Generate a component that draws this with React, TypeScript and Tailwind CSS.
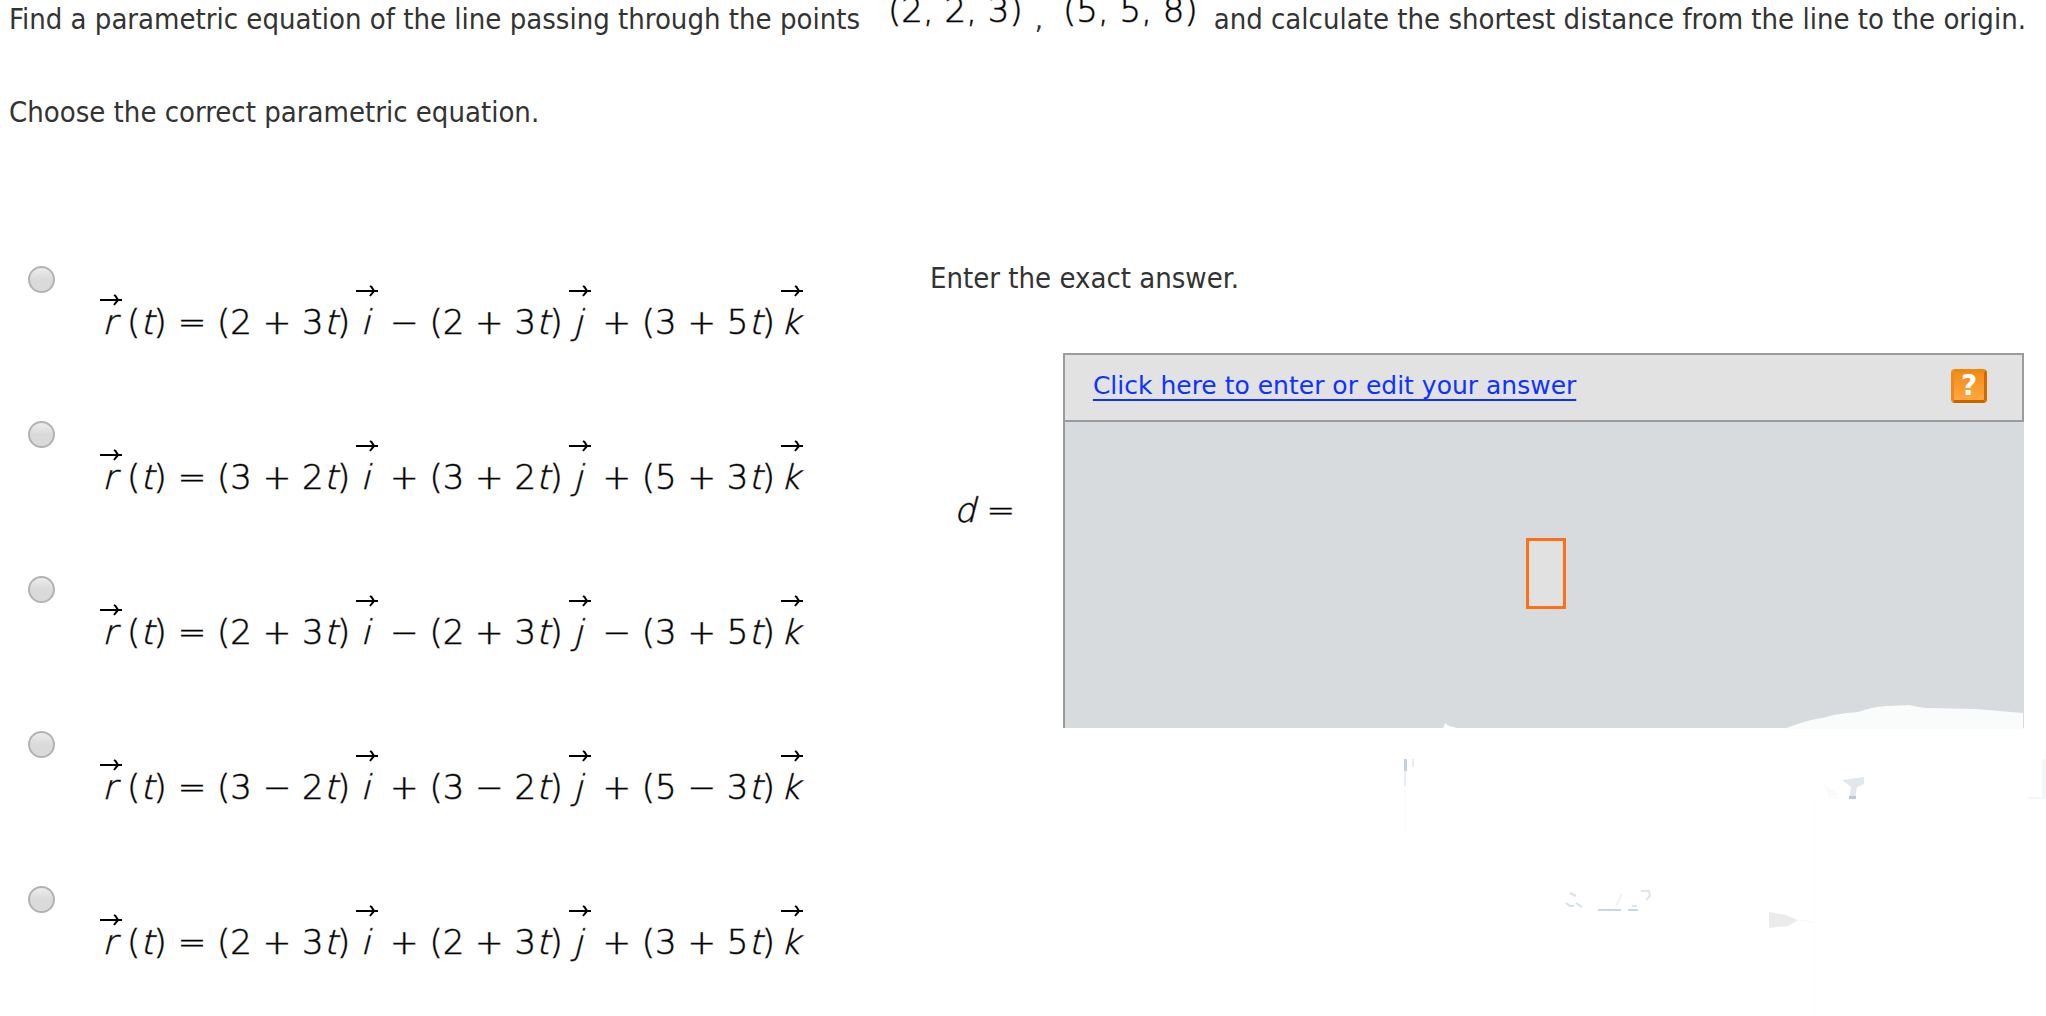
import React, { useState } from 'react';

interface Choice {
    id: string;
    inner: string;
    ops: [string, string];
    coefs: [string, string, string];
    steps: [string, string, string];
}

const choices: Choice[] = [
    { id: 'a', inner: '+', ops: ['−', '+'], coefs: ['2', '2', '3'], steps: ['3', '3', '5'] },
    { id: 'b', inner: '+', ops: ['+', '+'], coefs: ['3', '3', '5'], steps: ['2', '2', '3'] },
    { id: 'c', inner: '+', ops: ['−', '−'], coefs: ['2', '2', '3'], steps: ['3', '3', '5'] },
    { id: 'd', inner: '−', ops: ['+', '+'], coefs: ['3', '3', '5'], steps: ['2', '2', '3'] },
    { id: 'e', inner: '+', ops: ['+', '+'], coefs: ['2', '2', '3'], steps: ['3', '3', '5'] },
];

const mathFont =
    "font-['DejaVu_Sans_Light','DejaVu_Sans',sans-serif] text-[34px] leading-[40px] text-black whitespace-pre [-webkit-text-stroke:1px_#00000080]";

const Vec: React.FC<{ name: string; low?: boolean }> = ({ name, low }) => (
    <span className={`relative inline-block w-6 pr-1 text-center ${low ? 'mr-1' : 'ml-[5px]'}`}>
        <svg
            className={`absolute left-0 ${low ? '-top-2' : '-top-[17px]'}`}
            width="24"
            height="12"
            viewBox="0 0 24 12"
            fill="none"
            stroke="black"
            strokeWidth="2"
            aria-hidden="true"
        >
            <path d="M1 6H23M15 1L16.5 2L19 6L16.5 9L15 11" />
            <path d="M18 4V8" />
        </svg>
        <i>{name}</i>
    </span>
);

const Term: React.FC<{ coef: string; inner: string; step: string }> = ({ coef, inner, step }) => (
    <>
        ({coef} {inner} {step}
        <i>t</i>)
    </>
);

const Equation: React.FC<{ choice: Choice }> = ({ choice }) => {
    const { inner, ops, coefs, steps } = choice;
    return (
        <span className={`block pt-9 ${mathFont}`}>
            <Vec name="r" low />(<i>t</i>){' = '}
            <Term coef={coefs[0]} inner={inner} step={steps[0]} />
            <Vec name="i" />
            {` ${ops[0]} `}
            <Term coef={coefs[1]} inner={inner} step={steps[1]} />
            <Vec name="j" />
            {` ${ops[1]} `}
            <Term coef={coefs[2]} inner={inner} step={steps[2]} />
            <Vec name="k" />
        </span>
    );
};

// Leftover marks under the answer box
const Smudges = () => (
    <svg className="relative -mt-6 self-end" width="666" height="312" viewBox="1380 704 666 312" aria-hidden="true">
        <path d="M1786 728C1798 724 1808 720 1822 718C1836 714 1846 713 1858 712C1870 708 1880 706 1890 706L1909 705C1916 706 1922 708 1928 708L1975 709L2023 713V729H1786Z" fill="#fafbfb" />
        <path d="M1443 729L1445 723L1449 726L1457 728V729Z" fill="#ffffff" />
        <path d="M1404 759H1407V771H1404Z" fill="#c3d1de" />
        <path d="M1404 771H1406V786H1404ZM1412 759H1414V767H1412Z" fill="#e9eff4" />
        <path d="M1842 780L1864 777V784L1857 787L1855 799H1849L1851 787Z" fill="#e2e7ed" />
        <path d="M1849 796H1856V799H1849Z" fill="#bccbd9" />
        <path d="M1824 784L1838 794V799H1829Z" fill="#f9fafb" />
        <path d="M2042 759H2046V799H2028V797H2042Z" fill="#f4f7f9" />
        <path d="M1566 903L1570 906H1574M1576 903L1582 907M1570 893L1576 896" stroke="#d5e1e9" strokeWidth="2" fill="none" />
        <path d="M1598 910H1621M1628 910H1638" stroke="#c6d7e3" strokeWidth="2" />
        <path d="M1641 891L1649 891L1650 896L1646 900M1632 906H1637" stroke="#dbe6ee" strokeWidth="2" fill="none" />
        <path d="M1616 906L1622 894" stroke="#eef3f6" strokeWidth="2" />
        <path d="M1769 912L1786 915L1798 920L1788 926L1769 928Z" fill="#ebebeb" />
        <path d="M1798 920L1812 922" stroke="#f9f9f9" strokeWidth="2" />
        <path d="M1814 800V1016M1835 800V832" stroke="#fbfbfb" strokeWidth="1" />
        <path d="M1405 786V832" stroke="#fafbfc" strokeWidth="2" />
    </svg>
);

const AnswerPanel = () => (
    <div className="flex-1 border-l-2 border-t-2 border-[#999b9d] bg-[#d8dbde]">
        <div className="flex h-[67px] items-center justify-between border-b-2 border-r-2 border-[#999b9d] bg-[#e2e2e2] pr-[35px] pb-[3px] pl-7">
            <a
                href="#answer"
                className="font-['DejaVu_Sans',sans-serif] text-[25px] leading-8 text-[#0f33ff] underline decoration-2 underline-offset-5 [text-decoration-skip-ink:none]"
            >
                Click here to enter or edit your answer
            </a>
            <button
                type="button"
                aria-label="Help"
                className="flex h-[34px] w-9 items-center justify-center rounded-sm border-3 border-t-[#f0870f] border-r-[#cf6a00] border-b-[#c86400] border-l-[#ee8a1c] bg-linear-to-b from-[#f28c14] to-[#ffa740] font-['DejaVu_Sans',sans-serif] text-[28px] leading-7 font-bold text-white"
            >
                ?
            </button>
        </div>
        <div className="flex h-[306px] items-center justify-center pb-1 pl-1">
            <input
                id="answer"
                aria-label="Answer"
                className="h-[71px] w-10 border-3 border-[#ff6f14] bg-[#e1e1e1] text-center outline-none"
            />
        </div>
    </div>
);

export default function App() {
    const [selected, setSelected] = useState<string>('');

    return (
        <main className="min-h-screen overflow-hidden bg-white font-['DejaVu_Sans_Condensed','DejaVu_Sans',sans-serif] text-[29px] leading-[38px] text-[#333]">
            <div className="flex items-start pl-[9px] whitespace-nowrap">
                <p>Find a parametric equation of the line passing through the points</p>
                <span className={`-mt-[10px] ml-7 ${mathFont}`}>(2, 2, 3)</span>
                <span className="ml-3">,</span>
                <span className={`-mt-[10px] ml-5 ${mathFont}`}>(5, 5, 8)</span>
                <p className="ml-4">and calculate the shortest distance from the line to the origin.</p>
            </div>
            <p className="mt-[55px] pl-[9px]">Choose the correct parametric equation.</p>

            <div className="mt-32 grid grid-cols-[5fr_6fr]">
                <fieldset className="flex flex-col gap-[79px] pt-[7px] pl-7">
                    <legend className="sr-only">Choose the correct parametric equation.</legend>
                    {choices.map((choice) => (
                        <label key={choice.id} className="flex items-start gap-11">
                            <input
                                type="radio"
                                name="equation"
                                value={choice.id}
                                checked={selected === choice.id}
                                onChange={() => setSelected(choice.id)}
                                className="h-[27px] w-[27px] shrink-0 appearance-none rounded-full border-2 border-[#b2b2b2] bg-linear-to-b from-[#ececec] to-[#dadada] to-50% checked:border-8 checked:border-[#555]"
                            />
                            <Equation choice={choice} />
                        </label>
                    ))}
                </fieldset>

                <section className="flex flex-col">
                    <p>Enter the exact answer.</p>
                    <div className="mt-14 flex items-start gap-12 pr-[22px] pl-6">
                        <span className={`pt-[137px] ${mathFont}`}>
                            <i>d</i>
                            {' ='}
                        </span>
                        <AnswerPanel />
                    </div>
                    <Smudges />
                </section>
            </div>
        </main>
    );
}
